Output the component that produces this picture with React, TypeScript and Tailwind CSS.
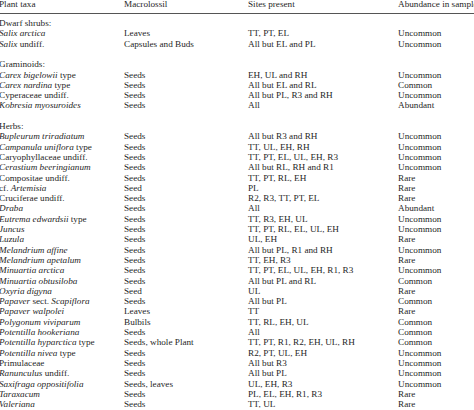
import React from "react";

type Cell = React.ReactNode;
type Row = [Cell, Cell, Cell, Cell] | null | string;

const I = ({ children }: { children: React.ReactNode }) => <i className="italic">{children}</i>;

const rows: Row[] = [
  "Dwarf shrubs:",
  [<><I>Salix arctica</I></>, "Leaves", "TT, PT, EL", "Uncommon"],
  [<><I>Salix</I> undiff.</>, "Capsules and Buds", "All but EL and PL", "Uncommon"],
  null,
  "Graminoids:",
  [<><I>Carex bigelowii</I> type</>, "Seeds", "EH, UL and RH", "Uncommon"],
  [<><I>Carex nardina</I> type</>, "Seeds", "All but EL and RL", "Common"],
  ["Cyperaceae undiff.", "Seeds", "All but PL, R3 and RH", "Uncommon"],
  [<I>Kobresia myosuroides</I>, "Seeds", "All", "Abundant"],
  null,
  "Herbs:",
  [<I>Bupleurum triradiatum</I>, "Seeds", "All but R3 and RH", "Uncommon"],
  [<><I>Campanula uniflora</I> type</>, "Seeds", "TT, UL, EH, RH", "Uncommon"],
  ["Caryophyllaceae undiff.", "Seeds", "TT, PT, EL, UL, EH, R3", "Uncommon"],
  [<I>Cerastium beeringianum</I>, "Seeds", "All but RL, RH and R1", "Uncommon"],
  ["Compositae undiff.", "Seeds", "TT, PT, RL, EH", "Rare"],
  [<>cf. <I>Artemisia</I></>, "Seed", "PL", "Rare"],
  ["Cruciferae undiff.", "Seeds", "R2, R3, TT, PT, EL", "Rare"],
  [<I>Draba</I>, "Seeds", "All", "Abundant"],
  [<><I>Eutrema edwardsii</I> type</>, "Seeds", "TT, R3, EH, UL", "Uncommon"],
  [<I>Juncus</I>, "Seeds", "TT, PT, RL, EL, UL, EH", "Uncommon"],
  [<I>Luzula</I>, "Seeds", "UL, EH", "Rare"],
  [<I>Melandrium affine</I>, "Seeds", "All but PL, R1 and RH", "Uncommon"],
  [<I>Melandrium apetalum</I>, "Seeds", "TT, EH, R3", "Rare"],
  [<I>Minuartia arctica</I>, "Seeds", "TT, PT, EL, UL, EH, R1, R3", "Uncommon"],
  [<I>Minuartia obtusiloba</I>, "Seeds", "All but PL and RL", "Common"],
  [<I>Oxyria digyna</I>, "Seed", "UL", "Rare"],
  [<><I>Papaver</I> sect. <I>Scapiflora</I></>, "Seeds", "All but PL", "Common"],
  [<I>Papaver walpolei</I>, "Leaves", "TT", "Rare"],
  [<I>Polygonum viviparum</I>, "Bulbils", "TT, RL, EH, UL", "Common"],
  [<I>Potentilla hookeriana</I>, "Seeds", "All", "Common"],
  [<><I>Potentilla hyparctica</I> type</>, "Seeds, whole Plant", "TT, PT, R1, R2, EH, UL, RH", "Common"],
  [<><I>Potentilla nivea</I> type</>, "Seeds", "R2, PT, UL, EH", "Uncommon"],
  ["Primulaceae", "Seeds", "All but R3", "Uncommon"],
  [<><I>Ranunculus</I> undiff.</>, "Seeds", "All but PL", "Uncommon"],
  [<I>Saxifraga oppositifolia</I>, "Seeds, leaves", "UL, EH, R3", "Uncommon"],
  [<I>Taraxacum</I>, "Seeds", "PL, EL, EH, R1, R3", "Rare"],
  [<I>Valeriana</I>, "Seeds", "TT, UL", "Rare"],
];

const grid = "grid grid-cols-[125px_124px_150px_auto] ml-[-1px] h-[10.3px]";

export default function App() {
  return (
    <div
      className="w-[474px] h-[410px] overflow-hidden bg-white text-[#1f1f1f] text-[9.2px] leading-[10.3px] whitespace-nowrap"
      style={{ fontFamily: '"Liberation Serif", "Times New Roman", serif' }}
    >
      <div className={`${grid} mt-[-1.2px]`}>
        <div>Plant taxa</div>
        <div>Macrolossil</div>
        <div>Sites present</div>
        <div>Abundance in sample</div>
      </div>
      <div className="mt-[3.5px] h-px bg-[#555555]" />
      <div className="mt-[4.5px]">
        {rows.map((r, i) => {
          if (r === null) return <div key={i} className="h-[10.3px]" />;
          if (typeof r === "string")
            return (
              <div key={i} className={grid}>
                <div>{r}</div>
              </div>
            );
          return (
            <div key={i} className={grid}>
              <div>{r[0]}</div>
              <div>{r[1]}</div>
              <div>{r[2]}</div>
              <div>{r[3]}</div>
            </div>
          );
        })}
      </div>
    </div>
  );
}
